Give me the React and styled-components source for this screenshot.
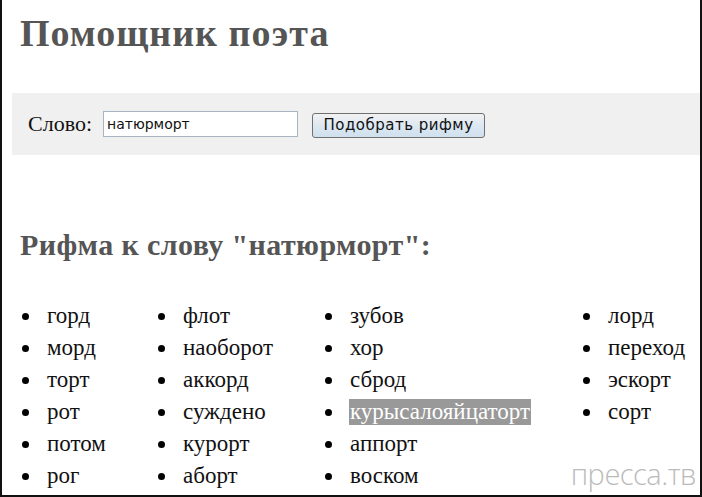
import React from "react";
import styled, { createGlobalStyle } from "styled-components";

const Global = createGlobalStyle`
  html, body { margin: 0; padding: 0; background: #fff; }
  body { font-family: "Liberation Serif", "Times New Roman", serif; }
`;

const columns = [
  ["горд", "морд", "торт", "рот", "потом", "рог"],
  ["флот", "наоборот", "аккорд", "суждено", "курорт", "аборт"],
  ["зубов", "хор", "сброд", "курысалояйцаторт", "аппорт", "воском"],
  ["лорд", "переход", "эскорт", "сорт"],
];

const App = () => {
  return (
    <Page>
      <Global />
      <Title>Помощник поэта</Title>
      <SearchBar>
        <Label>Слово:</Label>
        <Input defaultValue="натюрморт" />
        <Button>Подобрать рифму</Button>
      </SearchBar>
      <SubTitle>Рифма к слову "натюрморт":</SubTitle>
      <Columns>
        {columns.map((col, i) => (
          <List key={i}>
            {col.map((w) => (
              <Item key={w}>
                <Word $marked={w === "курысалояйцаторт"}>{w}</Word>
              </Item>
            ))}
          </List>
        ))}
      </Columns>
      <Watermark>пресса.тв</Watermark>
    </Page>
  );
};

const Page = styled.div`
  position: relative;
  width: 702px;
  height: 497px;
  box-sizing: border-box;
  border-left: 2px solid #111;
  border-right: 2px solid #111;
  border-bottom: 2px solid #111;
  overflow: hidden;
  padding-top: 12px;
`;

const Title = styled.h1`
  margin: 0 0 0 18px;
  font-family: "Liberation Serif", serif;
  font-weight: bold;
  font-size: 38px;
  line-height: 42px;
  letter-spacing: 1px;
  color: #555;
`;

const SearchBar = styled.div`
  display: flex;
  align-items: center;
  margin: 39px 0 0 10px;
  height: 62px;
  padding-left: 16px;
  background: #f0f0f0;
`;

const Label = styled.span`
  font-size: 22px;
  color: #111;
  margin-right: 11px;
`;

const Input = styled.input`
  box-sizing: border-box;
  width: 195px;
  height: 26px;
  padding: 1px 3px;
  border: 1px solid #a8b4c0;
  font-family: "DejaVu Sans", Tahoma, sans-serif;
  font-size: 14px;
  color: #111;
  background: #fff;
  outline: none;
`;

const Button = styled.button`
  box-sizing: border-box;
  margin: 2px 0 0 14px;
  height: 25px;
  width: 173px;
  padding: 0 6px;
  border: 1px solid #707070;
  border-radius: 3px;
  background: linear-gradient(#f2f2f2, #dde8f2 50%, #cfe0ee);
  font-family: "DejaVu Sans", Tahoma, sans-serif;
  font-size: 15px;
  letter-spacing: 0.5px;
  color: #111;
`;

const SubTitle = styled.h2`
  margin: 72px 0 0 18px;
  font-family: "Liberation Serif", serif;
  font-weight: bold;
  font-size: 30px;
  line-height: 36px;
  letter-spacing: 0.4px;
  color: #555;
`;

const Columns = styled.div`
  display: grid;
  grid-template-columns: 136px 167px 258px 1fr;
  margin: 37px 0 0 19px;
`;

const List = styled.ul`
  margin: 0;
  padding: 0;
  list-style: none;
`;

const Item = styled.li`
  display: flex;
  align-items: center;
  height: 32px;
  font-size: 23px;
  color: #111;

  &::before {
    content: "";
    width: 7px;
    height: 7px;
    margin: 0 18px 0 1px;
    border-radius: 50%;
    background: #000;
    flex: none;
  }
`;

const Word = styled.span`
  line-height: 26px;
  padding: 0 1px;
  margin-left: -1px;
  background: ${(p) => (p.$marked ? "#999" : "transparent")};
  color: ${(p) => (p.$marked ? "#fff" : "#111")};
`;

const Watermark = styled.div`
  position: absolute;
  right: 4px;
  bottom: 2px;
  font-family: "Open Sans", sans-serif;
  font-weight: 300;
  font-size: 29px;
  color: #bbb;
  letter-spacing: -0.5px;
`;

export default App;
